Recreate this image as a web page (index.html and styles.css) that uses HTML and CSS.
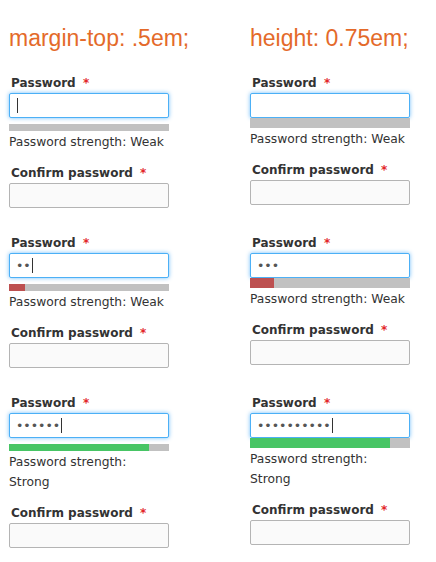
FILE: index.html
```html
<!DOCTYPE html>
<html lang="en">
<head>
    <meta charset="UTF-8">
    <meta name="viewport" content="width=device-width, initial-scale=1.0">
    <title>Password strength indicator</title>
    <link rel="stylesheet" href="styles.css">
</head>
<body>
    <div class="demo">
        <h2 class="demo-title">margin-top: .5em;</h2>
        <h2 class="demo-title">height: 0.75em;</h2>

        <!-- empty -->
        <div class="form-item">
            <label class="form-label">Password <span class="form-required">*</span></label>
            <div class="form-text is-focused"><span class="caret"></span></div>
            <div class="strength-bar"></div>
            <div class="strength-text">Password strength: Weak</div>
            <label class="form-label confirm">Confirm password <span class="form-required">*</span></label>
            <div class="form-text"></div>
        </div>
        <div class="form-item tall-bar">
            <label class="form-label">Password <span class="form-required">*</span></label>
            <div class="form-text is-focused"></div>
            <div class="strength-bar"></div>
            <div class="strength-text">Password strength: Weak</div>
            <label class="form-label confirm">Confirm password <span class="form-required">*</span></label>
            <div class="form-text"></div>
        </div>

        <!-- weak -->
        <div class="form-item">
            <label class="form-label">Password <span class="form-required">*</span></label>
            <div class="form-text is-focused"><span class="dots">••</span><span class="caret"></span></div>
            <div class="strength-bar"><div class="strength-fill weak" style="width: 16px"></div></div>
            <div class="strength-text">Password strength: Weak</div>
            <label class="form-label confirm">Confirm password <span class="form-required">*</span></label>
            <div class="form-text"></div>
        </div>
        <div class="form-item tall-bar">
            <label class="form-label">Password <span class="form-required">*</span></label>
            <div class="form-text is-focused"><span class="dots">•••</span></div>
            <div class="strength-bar"><div class="strength-fill weak" style="width: 24px"></div></div>
            <div class="strength-text">Password strength: Weak</div>
            <label class="form-label confirm">Confirm password <span class="form-required">*</span></label>
            <div class="form-text"></div>
        </div>

        <!-- strong -->
        <div class="form-item">
            <label class="form-label">Password <span class="form-required">*</span></label>
            <div class="form-text is-focused"><span class="dots">••••••</span><span class="caret"></span></div>
            <div class="strength-bar"><div class="strength-fill strong" style="width: 140px"></div></div>
            <div class="strength-text">Password strength: Strong</div>
            <label class="form-label confirm">Confirm password <span class="form-required">*</span></label>
            <div class="form-text"></div>
        </div>
        <div class="form-item tall-bar">
            <label class="form-label">Password <span class="form-required">*</span></label>
            <div class="form-text is-focused"><span class="dots">••••••••••</span><span class="caret"></span></div>
            <div class="strength-bar"><div class="strength-fill strong" style="width: 140px"></div></div>
            <div class="strength-text">Password strength: Strong</div>
            <label class="form-label confirm">Confirm password <span class="form-required">*</span></label>
            <div class="form-text"></div>
        </div>
    </div>
</body>
</html>
```

FILE: styles.css
```css
* {
    margin: 0;
    padding: 0;
    box-sizing: border-box;
}

body {
    font-family: "DejaVu Sans", Verdana, sans-serif;
    background: #fff;
    color: #333;
}

.demo {
    display: grid;
    grid-template-columns: 160px 160px;
    column-gap: 81px;
    align-items: start;
    padding: 24px 0 0 9px;
}

.demo-title {
    font-family: "Liberation Sans", Arial, sans-serif;
    font-size: 23px;
    font-weight: normal;
    line-height: 28px;
    color: #e46a2a;
    margin-bottom: 21px;
    white-space: nowrap;
}

.form-item {
    margin-bottom: 25px;
}

.form-label {
    display: block;
    font-size: 12px;
    font-weight: bold;
    line-height: 20px;
    color: #333;
    padding-left: 2px;
}

.form-label.confirm {
    margin-top: 11px;
}

.form-required {
    color: #e3262a;
    margin-left: 3px;
}

.form-text {
    display: flex;
    align-items: center;
    width: 160px;
    height: 25px;
    padding: 0 6px;
    background: #fafafa;
    border: 1px solid #b4b4b4;
    border-radius: 2px;
}

.form-text.is-focused {
    background: #fff;
    border-color: #4cb0f6;
    box-shadow: 0 0 4px rgba(80, 175, 250, 0.8);
}

.dots {
    font-size: 12.5px;
    color: #555;
}

.caret {
    display: inline-block;
    width: 1px;
    height: 15px;
    background: #333;
    margin-left: 1px;
}

.strength-bar {
    width: 160px;
    height: 7px;
    margin-top: 6px;
    background: #c1c1c1;
}

.tall-bar .strength-bar {
    height: 10px;
    margin-top: 0;
}

.strength-fill {
    height: 100%;
}

.strength-fill.weak {
    background: #bd5050;
}

.strength-fill.strong {
    background: #47c565;
}

.strength-text {
    margin-top: 1px;
    font-size: 12.3px;
    line-height: 20px;
    color: #333;
}
```
